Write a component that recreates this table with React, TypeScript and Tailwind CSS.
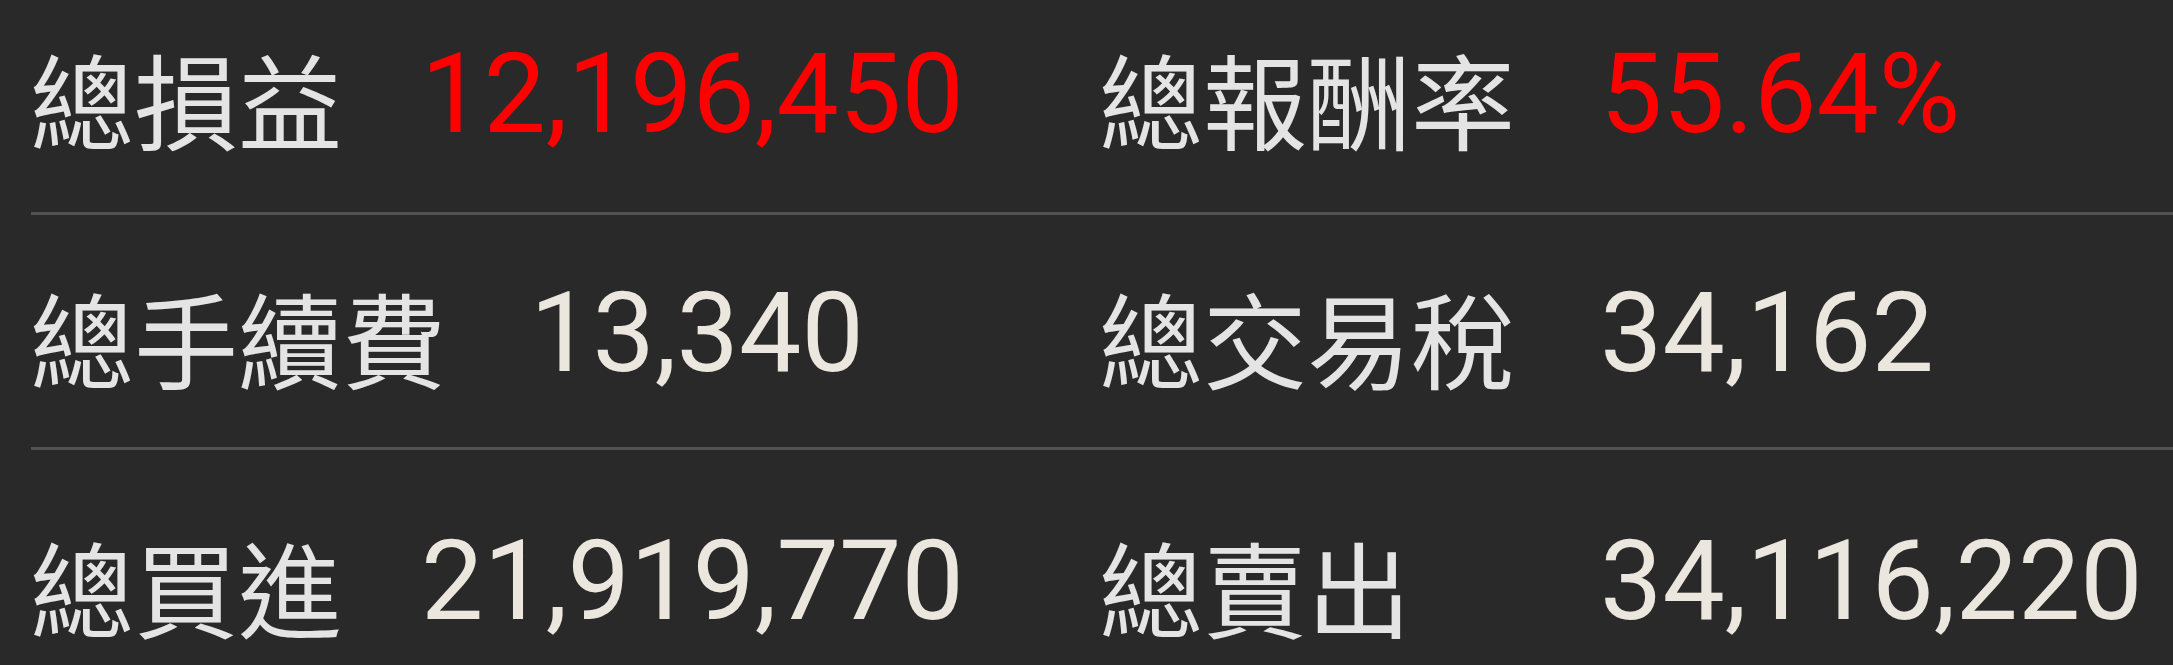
const cjk = { fontFamily: '"Noto Sans CJK TC", "Noto Sans CJK SC", sans-serif' }
const num = { fontFamily: 'Roboto, "Liberation Sans", sans-serif' }

type Cell = { label: string; value: string; red?: boolean }
type Row = { left: Cell; right: Cell; height: string; pad: string; labelTop: string; gap: string }

const rows: Row[] = [
  {
    left: { label: '總損益', value: '12,196,450', red: true },
    right: { label: '總報酬率', value: '55.64%', red: true },
    height: 'h-[212px]',
    pad: 'pt-[39px]',
    labelTop: 'mt-[7px]',
    gap: 'ml-[79px]',
  },
  {
    left: { label: '總手續費', value: '13,340' },
    right: { label: '總交易稅', value: '34,162' },
    height: 'h-[232px]',
    pad: 'pt-[63px]',
    labelTop: 'mt-[7px]',
    gap: 'ml-[84px]',
  },
  {
    left: { label: '總買進', value: '21,919,770' },
    right: { label: '總賣出', value: '34,116,220' },
    height: 'h-[216px]',
    pad: 'pt-[76px]',
    labelTop: 'mt-[8px]',
    gap: 'ml-[79px]',
  },
]

function Label({ text, top, className = '' }: { text: string; top: string; className?: string }) {
  return (
    <span style={cjk} className={`${top} shrink-0 whitespace-nowrap text-[104px] leading-none text-[#e4e4e4] ${className}`}>
      {text}
    </span>
  )
}

function Value({ text, red, className = '' }: { text: string; red?: boolean; className?: string }) {
  return (
    <span
      style={num}
      className={`whitespace-nowrap text-[111px] leading-none ${red ? 'text-[#ff0000]' : 'text-[#ebe7de]'} ${className}`}
    >
      {text}
    </span>
  )
}

export default function App() {
  return (
    <div className="h-[665px] w-full overflow-hidden bg-[#292929]">
      {rows.map((r, i) => (
        <div key={r.left.label}>
          {/* divider between rows */}
          {i > 0 && <div className="ml-[31px] h-[3px] bg-[#525252]" />}
          <div className={`flex ${r.height} ${r.pad} pl-[30px]`}>
            <div className="flex w-[1069px] shrink-0 items-start">
              <Label text={r.left.label} top={r.labelTop} />
              <Value text={r.left.value} red={r.left.red} className={r.gap} />
            </div>
            <div className="flex items-start">
              <Label text={r.right.label} top={r.labelTop} className="w-[501px]" />
              <Value text={r.right.value} red={r.right.red} />
            </div>
          </div>
        </div>
      ))}
    </div>
  )
}
